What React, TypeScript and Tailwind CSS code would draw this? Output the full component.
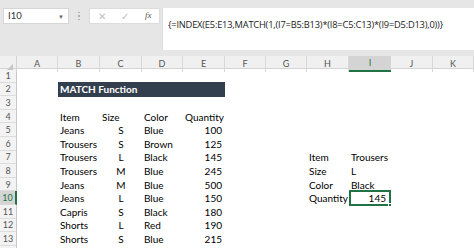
import React from "react";

const cols = ["A", "B", "C", "D", "E", "F", "G", "H", "I", "J", "K"];
const grid = "grid grid-cols-[17px_41px_42px_42px_41px_42px_41px_41px_42px_42px_42px_41px]";

type Row = { item?: string; size?: string; color?: string; qty?: string; lk?: string; lv?: string };

const rows: Row[] = [
  {},
  {},
  {},
  { item: "Item", size: "Size", color: "Color", qty: "Quantity" },
  { item: "Jeans", size: "S", color: "Blue", qty: "100" },
  { item: "Trousers", size: "S", color: "Brown", qty: "125" },
  { item: "Trousers", size: "L", color: "Black", qty: "145", lk: "Item", lv: "Trousers" },
  { item: "Trousers", size: "M", color: "Blue", qty: "245", lk: "Size", lv: "L" },
  { item: "Jeans", size: "M", color: "Blue", qty: "500", lk: "Color", lv: "Black" },
  { item: "Jeans", size: "L", color: "Blue", qty: "150", lk: "Quantity" },
  { item: "Capris", size: "S", color: "Black", qty: "180" },
  { item: "Shorts", size: "L", color: "Red", qty: "190" },
  { item: "Shorts", size: "S", color: "Blue", qty: "215" },
  {},
];

export default function App() {
  return (
    <div className="w-[474px] h-[248px] overflow-hidden bg-white text-black font-['Lato',sans-serif]">
      {/* toolbar + formula bar */}
      <div className="h-[56px] bg-[#e6e6e6] flex items-start pt-[8px]">
        <div className="ml-[3px] w-[66px] h-[16px] bg-white border border-[#d6d6d6] flex items-center justify-between px-[4px]">
          <span className="text-[9.5px] text-[#333]">I10</span>
          <span className="text-[6px] text-[#666]">▼</span>
        </div>
        <div className="w-[20px] h-[16px] flex flex-col items-center justify-center gap-[2px]">
          <span className="w-[1.5px] h-[1.5px] bg-[#b0b0b0]" />
          <span className="w-[1.5px] h-[1.5px] bg-[#b0b0b0]" />
          <span className="w-[1.5px] h-[1.5px] bg-[#b0b0b0]" />
        </div>
        <div className="w-[71px] h-[16px] bg-white border border-[#dcdcdc] flex items-center">
          <span className="w-[24px] text-center text-[10px] text-[#c0c0c0]">✕</span>
          <span className="w-[24px] text-center text-[10px] text-[#c0c0c0]">✓</span>
          <span className="w-[22px] text-center text-[9px] italic text-[#555] font-['Liberation_Serif',serif]">fx</span>
        </div>
        <div className="ml-[2px] flex-1 h-[42px] bg-white border-l border-[#dcdcdc] pl-[5px] pt-[2px]">
          <span className="text-[9.3px] text-[#222] font-['Open_Sans',sans-serif] tracking-[-0.2px]">
            {"{=INDEX(E5:E13,MATCH(1,(I7=B5:B13)*(I8=C5:C13)*(I9=D5:D13),0))}"}
          </span>
        </div>
      </div>

      {/* column headers */}
      <div className={`${grid} h-[13px] bg-[#f0f0f0] border-b border-[#d4d4d4]`}>
        <div className="relative border-r border-[#d4d4d4]">
          <span className="absolute right-[3px] bottom-[2px] w-0 h-0 border-l-[6px] border-l-transparent border-b-[6px] border-b-[#c6c6c6]" />
        </div>
        {cols.map((c) => (
          <div
            key={c}
            className={
              c === "I"
                ? "flex items-center justify-center text-[9px] text-[#217346] bg-[#d4d4d4] border-b-2 border-[#217346]"
                : "flex items-center justify-center text-[9px] text-[#555] border-r border-[#d8d8d8]"
            }
          >
            {c}
          </div>
        ))}
      </div>

      {/* rows */}
      {rows.map((r, i) => {
        const n = i + 1;
        return (
          <div key={n} className={`${grid} h-[13.6px] text-[10px] leading-none`}>
            <div
              className={
                n === 10
                  ? "flex items-center justify-center text-[9px] text-[#217346] bg-[#d4d4d4] border-r-2 border-[#217346] border-b border-b-[#d8d8d8]"
                  : "flex items-center justify-center text-[9px] text-[#555] bg-[#f3f3f3] border-r border-[#c8c8c8] border-b border-b-[#dcdcdc]"
              }
            >
              {n < 14 ? n : ""}
            </div>
            <div />
            {n === 2 ? (
              <div className="col-span-4 bg-[#333f4f] text-white font-bold flex items-center pl-[2px] mt-[-1px] mb-[-1px]">
                MATCH Function
              </div>
            ) : (
              <>
                <div className="flex items-center pl-[2px]">{r.item}</div>
                <div className={`flex items-center ${n === 4 ? "pl-[2px]" : "justify-center"}`}>{r.size}</div>
                <div className="flex items-center pl-[2px]">{r.color}</div>
                <div className={`flex items-center ${n === 4 ? "pl-[2px]" : "justify-end pr-[3px]"}`}>{r.qty}</div>
              </>
            )}
            <div />
            <div />
            <div className="flex items-center pl-[2px]">{r.lk}</div>
            {n === 10 ? (
              <div className="relative flex items-center justify-end pr-[3px] border-2 border-[#217346] mt-[-1px] mb-[-1px]">
                145
                <span className="absolute right-[-3px] bottom-[-3px] w-[4px] h-[4px] bg-[#217346] border border-white" />
              </div>
            ) : (
              <div className="flex items-center pl-[2px]">{r.lv}</div>
            )}
            <div />
            <div />
          </div>
        );
      })}
    </div>
  );
}
